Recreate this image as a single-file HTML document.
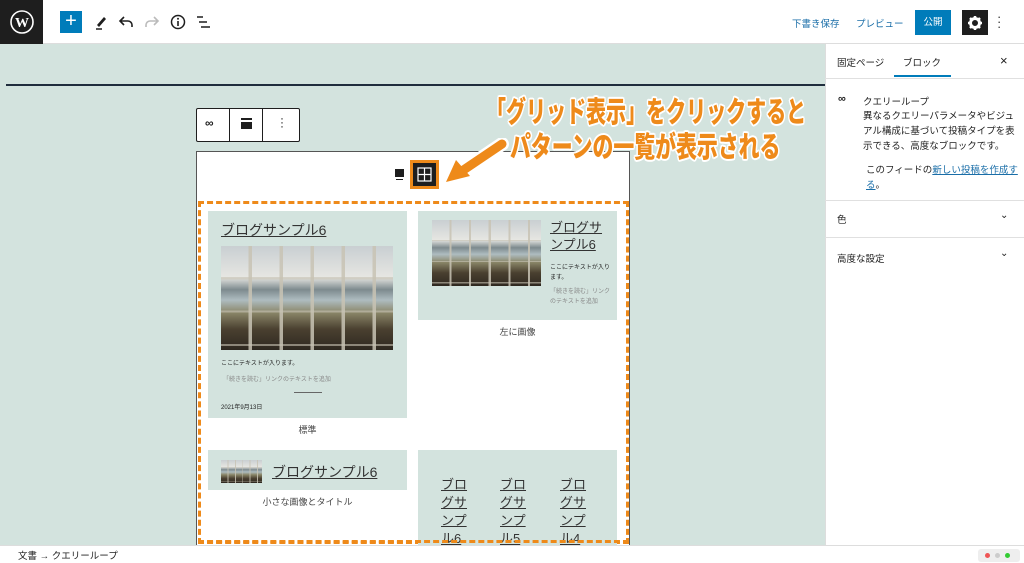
<!DOCTYPE html>
<html><head><meta charset="utf-8"><style>
*{box-sizing:border-box;margin:0;padding:0}
body{width:1024px;height:563px;overflow:hidden;position:relative;background:#d3e3de;font-family:"Liberation Sans","Noto Sans CJK JP",sans-serif;color:#1e1e1e}
.a{position:absolute}
.hdr{left:0;top:0;width:1024px;height:44px;background:#fff;border-bottom:1px solid #ddd}
.side{left:825px;top:44px;width:199px;height:501px;background:#fff;border-left:1px solid #ddd}
.foot{left:0;top:545px;width:1024px;height:18px;background:#fff;border-top:1px solid #ddd;font-size:10px}
.card{background:#d3e3de}
.photo{background:linear-gradient(180deg,#c9cfd2 0%,#e6e6e2 30%,#7d8a8e 42%,#aebcc0 52%,#8a8668 64%,#4a4030 80%,#2e2820 100%);overflow:hidden}
.photo:before{content:"";position:absolute;inset:0;background:repeating-linear-gradient(90deg,transparent 0 16%,rgba(200,195,180,.85) 16% 18%),repeating-linear-gradient(180deg,transparent 0 30%,rgba(200,195,180,.6) 30% 32%)}
.tl{text-decoration:underline;color:#333}
.lbl{font-size:9px;color:#444;text-align:center}
.ann{font-weight:900;font-size:29px;color:#ee8a1a;white-space:nowrap;transform-origin:0 0;text-shadow:2px 0 #fff,-2px 0 #fff,0 2px #fff,0 -2px #fff,1.5px 1.5px #fff,-1.5px -1.5px #fff,1.5px -1.5px #fff,-1.5px 1.5px #fff}
</style></head><body>
<div class="a hdr"></div>
<div class="a" style="left:0;top:0;width:43px;height:44px;background:#1e1e1e"></div>
<svg class="a" style="left:10px;top:10px" width="24" height="24" viewBox="0 0 24 24"><circle cx="12" cy="12" r="11" fill="none" stroke="#fff" stroke-width="1.6"/><text x="12" y="17" text-anchor="middle" font-size="14" font-weight="bold" fill="#fff" font-family="Liberation Serif">W</text></svg>
<div class="a" style="left:60px;top:11px;width:22px;height:22px;background:#007cba;color:#fff;font-size:20px;line-height:21px;text-align:center">+</div>
<svg class="a" style="left:92px;top:13px" width="18" height="18" viewBox="0 0 18 18"><path d="M5 12L12 4l2 2-7 8z" fill="#1e1e1e"/><path d="M4 16h6" stroke="#1e1e1e" stroke-width="1.5"/></svg>
<svg class="a" style="left:118px;top:14px" width="16" height="16" viewBox="0 0 16 16" fill="none" stroke="#1e1e1e" stroke-width="1.6"><path d="M6 3L2 7l4 4M2 7h8a4 4 0 014 4v2"/></svg>
<svg class="a" style="left:144px;top:14px" width="16" height="16" viewBox="0 0 16 16" fill="none" stroke="#bbb" stroke-width="1.6"><path d="M10 3l4 4-4 4M14 7H6a4 4 0 00-4 4v2"/></svg>
<svg class="a" style="left:170px;top:14px" width="16" height="16" viewBox="0 0 16 16"><circle cx="8" cy="8" r="6.5" fill="none" stroke="#1e1e1e" stroke-width="1.5"/><path d="M8 7v5" stroke="#1e1e1e" stroke-width="1.6"/><circle cx="8" cy="4.8" r="1" fill="#1e1e1e"/></svg>
<svg class="a" style="left:196px;top:15px" width="16" height="14" viewBox="0 0 16 14" stroke="#1e1e1e" stroke-width="1.6"><path d="M1 2h6M3 7h8M5 12h9"/></svg>
<div class="a" style="left:792px;top:16px;font-size:9.5px;color:#1a6ea8">下書き保存</div>
<div class="a" style="left:856px;top:16px;font-size:9.5px;color:#1a6ea8">プレビュー</div>
<div class="a" style="left:915px;top:10px;width:36px;height:25px;background:#007cba;color:#fff;font-size:9.5px;line-height:25px;text-align:center">公開</div>
<div class="a" style="left:962px;top:10px;width:26px;height:25px;background:#1e1e1e"></div>
<svg class="a" style="left:968px;top:16px" width="14" height="14" viewBox="0 0 14 14"><circle cx="7" cy="7" r="4.5" fill="none" stroke="#fff" stroke-width="3"/><path d="M7 0v3M7 11v3M0 7h3M11 7h3M2 2l2 2M10 10l2 2M12 2l-2 2M2 12l2-2" stroke="#fff" stroke-width="2.5"/><circle cx="7" cy="7" r="1.5" fill="#1e1e1e"/></svg>
<div class="a" style="left:997px;top:14px;font-size:13px;line-height:5px;color:#333">·<br>·<br>·</div>
<div class="a" style="left:6px;top:84px;width:819px;height:2px;background:#1f2d3d"></div>

<div class="a side"></div>
<div class="a" style="left:837px;top:55px;font-size:9.5px">固定ページ</div>
<div class="a" style="left:903px;top:55px;font-size:9.5px">ブロック</div>
<div class="a" style="left:894px;top:75px;width:57px;height:2px;background:#007cba"></div>
<div class="a" style="left:1000px;top:53px;font-size:13px">×</div>
<div class="a" style="left:825px;top:78px;width:199px;height:1px;background:#e0e0e0"></div>
<div class="a" style="left:838px;top:93px;font-size:11px;font-weight:bold">∞</div>
<div class="a" style="left:863px;top:94px;font-size:9.5px">クエリーループ</div>
<div class="a" style="left:863px;top:109px;font-size:9.5px;line-height:15px;width:155px">異なるクエリーパラメータやビジュアル構成に基づいて投稿タイプを表示できる、高度なブロックです。</div>
<div class="a" style="left:866px;top:163px;font-size:9.5px;line-height:15px;width:155px">このフィードの<span style="color:#1a6ea8;text-decoration:underline">新しい投稿を作成する</span>。</div>
<div class="a" style="left:825px;top:200px;width:199px;height:1px;background:#e0e0e0"></div>
<div class="a" style="left:837px;top:212px;font-size:9.5px">色</div>
<div class="a" style="left:1000px;top:210px;font-size:10px">⌄</div>
<div class="a" style="left:825px;top:237px;width:199px;height:1px;background:#e0e0e0"></div>
<div class="a" style="left:837px;top:251px;font-size:9.5px">高度な設定</div>
<div class="a" style="left:1000px;top:248px;font-size:10px">⌄</div>

<div class="a" style="left:196px;top:108px;width:104px;height:34px;background:#fff;border:1px solid #1e1e1e;border-radius:2px"></div>
<div class="a" style="left:229px;top:108px;width:1px;height:34px;background:#1e1e1e"></div>
<div class="a" style="left:262px;top:108px;width:1px;height:34px;background:#1e1e1e"></div>
<div class="a" style="left:205px;top:116px;font-size:12px;font-weight:bold">∞</div>
<div class="a" style="left:241px;top:118px;width:11px;height:11px;border-top:2px solid #1e1e1e;border-bottom:2px solid #1e1e1e;background:linear-gradient(#fff 0 2px,#1e1e1e 2px 8px,#fff 8px)"></div>
<div class="a" style="left:280px;top:116px;font-size:12px;line-height:4px">·<br>·<br>·</div>

<div class="a" style="left:196px;top:151px;width:434px;height:400px;background:#fff;border:1px solid #555"></div>
<div class="a" style="left:395px;top:169px;width:9px;height:8px;background:#1e1e1e"></div>
<div class="a" style="left:396px;top:179px;width:7px;height:1px;background:#1e1e1e"></div>
<div class="a" style="left:410px;top:160px;width:29px;height:29px;border:3px solid #ee8a1a;background:#1e1e1e"></div>
<svg class="a" style="left:417px;top:167px" width="15" height="15" viewBox="0 0 15 15" fill="none" stroke="#fff" stroke-width="1.2"><rect x="1" y="1" width="13" height="13"/><path d="M7.5 1v13M1 7.5h13"/></svg>
<svg class="a" style="left:440px;top:138px" width="70" height="50" viewBox="0 0 70 50"><path d="M62 6L22 33" stroke="#fff" stroke-width="14" stroke-linecap="round"/><path d="M6 44L16 22 30 38z" fill="#fff" stroke="#fff" stroke-width="4"/><path d="M62 6L22 33" stroke="#ee8a1a" stroke-width="9" stroke-linecap="round"/><path d="M6 44L16 22 30 38z" fill="#ee8a1a"/></svg>
<div class="a ann" style="left:486px;top:89px;transform:scaleX(0.69)">「グリッド表示」をクリックすると</div>
<div class="a ann" style="left:510px;top:124px;transform:scaleX(0.72)">パターンの一覧が表示される</div>

<div class="a" style="left:198px;top:201px;width:431px;height:343px;border:3px dashed #ee8a1a"></div>

<div class="a card" style="left:208px;top:211px;width:199px;height:207px"></div>
<div class="a tl" style="left:221px;top:220px;font-size:14px">ブログサンプル6</div>
<div class="a photo" style="left:221px;top:246px;width:172px;height:104px"></div>
<div class="a" style="left:221px;top:358px;font-size:6px">ここにテキストが入ります。</div>
<div class="a" style="left:223px;top:374px;font-size:6px;color:#888">「続きを読む」リンクのテキストを追加</div>
<div class="a" style="left:294px;top:392px;width:28px;height:1px;background:#666"></div>
<div class="a" style="left:221px;top:402px;font-size:6px">2021年9月13日</div>
<div class="a lbl" style="left:208px;top:423px;width:199px">標準</div>

<div class="a card" style="left:418px;top:211px;width:199px;height:109px"></div>
<div class="a photo" style="left:432px;top:220px;width:109px;height:66px"></div>
<div class="a tl" style="left:550px;top:219px;font-size:13px;line-height:17px;width:60px">ブログサンプル6</div>
<div class="a" style="left:550px;top:263px;font-size:6px;line-height:10px;width:60px">ここにテキストが入ります。</div>
<div class="a" style="left:550px;top:287px;font-size:6px;line-height:10px;width:60px;color:#888">「続きを読む」リンクのテキストを追加</div>
<div class="a lbl" style="left:418px;top:325px;width:199px">左に画像</div>

<div class="a card" style="left:208px;top:450px;width:199px;height:40px"></div>
<div class="a photo" style="left:221px;top:460px;width:41px;height:23px"></div>
<div class="a tl" style="left:272px;top:462px;font-size:14px">ブログサンプル6</div>
<div class="a lbl" style="left:208px;top:495px;width:199px">小さな画像とタイトル</div>

<div class="a card" style="left:418px;top:450px;width:199px;height:95px"></div>
<div class="a tl" style="left:441px;top:476px;font-size:13px;line-height:18px;width:28px">ブログサンプル6</div>
<div class="a tl" style="left:500px;top:476px;font-size:13px;line-height:18px;width:28px">ブログサンプル5</div>
<div class="a tl" style="left:560px;top:476px;font-size:13px;line-height:18px;width:28px">ブログサンプル4</div>
<div class="a" style="left:198px;top:540px;width:431px;height:4px;border-top:3px dashed #ee8a1a"></div>

<div class="a foot"></div>
<div class="a" style="left:18px;top:548px;font-size:9.5px">文書 → クエリーループ</div>
<div class="a" style="left:978px;top:549px;width:42px;height:13px;background:#eee;border-radius:3px"></div>
<div class="a" style="left:985px;top:553px;width:5px;height:5px;border-radius:50%;background:#e55"></div>
<div class="a" style="left:995px;top:553px;width:5px;height:5px;border-radius:50%;background:#ccc"></div>
<div class="a" style="left:1005px;top:553px;width:5px;height:5px;border-radius:50%;background:#3c3"></div>
</body></html>
